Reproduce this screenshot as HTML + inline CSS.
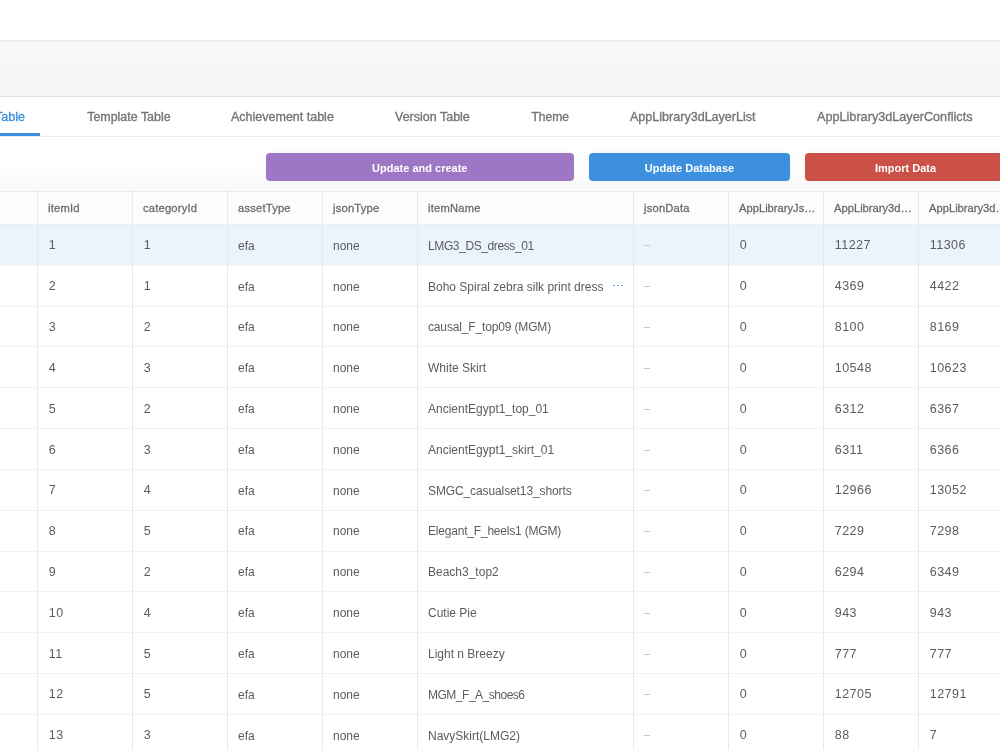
<!DOCTYPE html>
<html><head><meta charset="utf-8">
<style>
*{margin:0;padding:0;box-sizing:border-box}
html,body{width:1000px;height:750px;overflow:hidden;background:#fff;font-family:"Liberation Sans",sans-serif}
#root{position:absolute;left:0;top:0;width:1000px;height:750px;overflow:hidden;will-change:transform}
.abs{position:absolute}
#band{left:0;top:40px;width:1000px;height:57px;background:linear-gradient(#f8f8f8,#f4f4f4);border-top:2px solid #ebebeb;border-bottom:1px solid #dedede}
#tabs{left:0;top:97px;width:1000px;height:40px;background:#fff;border-bottom:1px solid #ececec}
.tab{position:absolute;top:108.8px;font-size:12.5px;line-height:16px;color:#757575;white-space:nowrap;-webkit-text-stroke:0.35px #757575}
.tab.active{color:#3d8fdd;-webkit-text-stroke:0.35px #3d8fdd}
#ink{left:0;top:133px;width:40px;height:3px;background:#3b8ee0}
#btnarea{left:0;top:137px;width:1000px;height:54px;background:linear-gradient(#fff 0%,#fefefe 60%,#f8f8f8 100%)}
.btn{position:absolute;top:153.2px;height:27.8px;border-radius:4px;box-shadow:0 0 10px rgba(0,0,0,0.035);color:#fff;font-weight:bold;font-size:11px;line-height:27.5px;padding-top:1.5px;text-align:center;white-space:nowrap}
.hrow{position:absolute;left:0;width:1000px;height:34px;background:#fcfcfc;border-top:1px solid #ececec;border-bottom:1px solid #ececec}
.row{position:absolute;left:0;width:1000px;height:40.82px;border-bottom:1px solid #f2f2f2;background:#fff}
.row.sel{background:#ebf4fd}
.vl{position:absolute;width:1px;height:560px;background:#e8e8e8}
.c{position:absolute;white-space:nowrap;font-size:12px;color:#5c5c5c;line-height:16px}
.c.n{letter-spacing:0.45px;font-size:12.5px;margin-left:0.8px;margin-top:-0.3px}
.h{position:absolute;white-space:nowrap;font-size:11.2px;color:#6a6a6a;line-height:14px;letter-spacing:0.2px;-webkit-text-stroke:0.28px #6a6a6a}
.more{position:absolute;left:613.2px;height:2px;width:10px}
.more i{position:absolute;top:0;width:1.7px;height:1.7px;border-radius:50%;background:#4a96e0}
.more i:nth-child(1){left:0}.more i:nth-child(2){left:4px}.more i:nth-child(3){left:8px}
.dash{position:absolute;width:6px;height:1px;background:#c8c8c8}
</style></head><body><div id="root">
<div class="abs" id="band"></div>
<div class="abs" id="tabs"></div>
<div class="tab active" style="left:-5px;font-size:12.5px">Table</div>
<div class="tab" style="left:87.2px;font-size:12.45px">Template Table</div>
<div class="tab" style="left:231px;font-size:12.5px">Achievement table</div>
<div class="tab" style="left:395px;font-size:12.5px">Version Table</div>
<div class="tab" style="left:531.5px;font-size:12.0px">Theme</div>
<div class="tab" style="left:630px;font-size:12.55px">AppLibrary3dLayerList</div>
<div class="tab" style="left:817px;font-size:12.66px">AppLibrary3dLayerConflicts</div>
<div class="abs" id="ink"></div>
<div class="abs" id="btnarea"></div>
<div class="btn" style="left:265.5px;width:308.5px;background:#9d76c4">Update and create</div>
<div class="btn" style="left:589px;width:201px;background:#3d90dd">Update Database</div>
<div class="btn" style="left:805px;width:201px;background:#cb5148">Import Data</div>
<div class="hrow" style="top:191px"></div>
<div class="h" style="left:48px;top:200.8px">itemId</div>
<div class="h" style="left:143px;top:200.8px">categoryId</div>
<div class="h" style="left:238px;top:200.8px">assetType</div>
<div class="h" style="left:333px;top:200.8px">jsonType</div>
<div class="h" style="left:428px;top:200.8px">itemName</div>
<div class="h" style="left:644px;top:200.8px">jsonData</div>
<div class="h" style="left:739px;top:200.8px;letter-spacing:0">AppLibraryJs…</div>
<div class="h" style="left:834px;top:200.8px;letter-spacing:0">AppLibrary3d…</div>
<div class="h" style="left:929px;top:200.8px;letter-spacing:0">AppLibrary3d…</div>
<div class="row sel" style="top:225.00px"></div>
<div class="row" style="top:265.82px"></div>
<div class="row" style="top:306.64px"></div>
<div class="row" style="top:347.46px"></div>
<div class="row" style="top:388.28px"></div>
<div class="row" style="top:429.10px"></div>
<div class="row" style="top:469.92px"></div>
<div class="row" style="top:510.74px"></div>
<div class="row" style="top:551.56px"></div>
<div class="row" style="top:592.38px"></div>
<div class="row" style="top:633.20px"></div>
<div class="row" style="top:674.02px"></div>
<div class="row" style="top:714.84px"></div>
<div class="c n" style="left:48px;top:237.70px">1</div>
<div class="c n" style="left:143px;top:237.70px">1</div>
<div class="c" style="left:238px;top:237.70px">efa</div>
<div class="c" style="left:333px;top:237.70px">none</div>
<div class="c" style="left:428px;top:237.70px;letter-spacing:-0.39px">LMG3_DS_dress_01</div>
<div class="dash" style="left:644px;top:245.40px"></div>
<div class="c n" style="left:739px;top:237.70px">0</div>
<div class="c n" style="left:834px;top:237.70px">11227</div>
<div class="c n" style="left:929px;top:237.70px">11306</div>
<div class="c n" style="left:48px;top:278.52px">2</div>
<div class="c n" style="left:143px;top:278.52px">1</div>
<div class="c" style="left:238px;top:278.52px">efa</div>
<div class="c" style="left:333px;top:278.52px">none</div>
<div class="c" style="left:428px;top:278.52px">Boho Spiral zebra silk print dress</div>
<div class="dash" style="left:644px;top:286.22px"></div>
<div class="c n" style="left:739px;top:278.52px">0</div>
<div class="c n" style="left:834px;top:278.52px">4369</div>
<div class="c n" style="left:929px;top:278.52px">4422</div>
<div class="more" style="top:284.72px"><i></i><i></i><i></i></div>
<div class="c n" style="left:48px;top:319.34px">3</div>
<div class="c n" style="left:143px;top:319.34px">2</div>
<div class="c" style="left:238px;top:319.34px">efa</div>
<div class="c" style="left:333px;top:319.34px">none</div>
<div class="c" style="left:428px;top:319.34px;letter-spacing:-0.15px">causal_F_top09 (MGM)</div>
<div class="dash" style="left:644px;top:327.04px"></div>
<div class="c n" style="left:739px;top:319.34px">0</div>
<div class="c n" style="left:834px;top:319.34px">8100</div>
<div class="c n" style="left:929px;top:319.34px">8169</div>
<div class="c n" style="left:48px;top:360.16px">4</div>
<div class="c n" style="left:143px;top:360.16px">3</div>
<div class="c" style="left:238px;top:360.16px">efa</div>
<div class="c" style="left:333px;top:360.16px">none</div>
<div class="c" style="left:428px;top:360.16px">White Skirt</div>
<div class="dash" style="left:644px;top:367.86px"></div>
<div class="c n" style="left:739px;top:360.16px">0</div>
<div class="c n" style="left:834px;top:360.16px">10548</div>
<div class="c n" style="left:929px;top:360.16px">10623</div>
<div class="c n" style="left:48px;top:400.98px">5</div>
<div class="c n" style="left:143px;top:400.98px">2</div>
<div class="c" style="left:238px;top:400.98px">efa</div>
<div class="c" style="left:333px;top:400.98px">none</div>
<div class="c" style="left:428px;top:400.98px">AncientEgypt1_top_01</div>
<div class="dash" style="left:644px;top:408.68px"></div>
<div class="c n" style="left:739px;top:400.98px">0</div>
<div class="c n" style="left:834px;top:400.98px">6312</div>
<div class="c n" style="left:929px;top:400.98px">6367</div>
<div class="c n" style="left:48px;top:441.80px">6</div>
<div class="c n" style="left:143px;top:441.80px">3</div>
<div class="c" style="left:238px;top:441.80px">efa</div>
<div class="c" style="left:333px;top:441.80px">none</div>
<div class="c" style="left:428px;top:441.80px">AncientEgypt1_skirt_01</div>
<div class="dash" style="left:644px;top:449.50px"></div>
<div class="c n" style="left:739px;top:441.80px">0</div>
<div class="c n" style="left:834px;top:441.80px">6311</div>
<div class="c n" style="left:929px;top:441.80px">6366</div>
<div class="c n" style="left:48px;top:482.62px">7</div>
<div class="c n" style="left:143px;top:482.62px">4</div>
<div class="c" style="left:238px;top:482.62px">efa</div>
<div class="c" style="left:333px;top:482.62px">none</div>
<div class="c" style="left:428px;top:482.62px;letter-spacing:-0.11px">SMGC_casualset13_shorts</div>
<div class="dash" style="left:644px;top:490.32px"></div>
<div class="c n" style="left:739px;top:482.62px">0</div>
<div class="c n" style="left:834px;top:482.62px">12966</div>
<div class="c n" style="left:929px;top:482.62px">13052</div>
<div class="c n" style="left:48px;top:523.44px">8</div>
<div class="c n" style="left:143px;top:523.44px">5</div>
<div class="c" style="left:238px;top:523.44px">efa</div>
<div class="c" style="left:333px;top:523.44px">none</div>
<div class="c" style="left:428px;top:523.44px;letter-spacing:-0.2px">Elegant_F_heels1 (MGM)</div>
<div class="dash" style="left:644px;top:531.14px"></div>
<div class="c n" style="left:739px;top:523.44px">0</div>
<div class="c n" style="left:834px;top:523.44px">7229</div>
<div class="c n" style="left:929px;top:523.44px">7298</div>
<div class="c n" style="left:48px;top:564.26px">9</div>
<div class="c n" style="left:143px;top:564.26px">2</div>
<div class="c" style="left:238px;top:564.26px">efa</div>
<div class="c" style="left:333px;top:564.26px">none</div>
<div class="c" style="left:428px;top:564.26px">Beach3_top2</div>
<div class="dash" style="left:644px;top:571.96px"></div>
<div class="c n" style="left:739px;top:564.26px">0</div>
<div class="c n" style="left:834px;top:564.26px">6294</div>
<div class="c n" style="left:929px;top:564.26px">6349</div>
<div class="c n" style="left:48px;top:605.08px">10</div>
<div class="c n" style="left:143px;top:605.08px">4</div>
<div class="c" style="left:238px;top:605.08px">efa</div>
<div class="c" style="left:333px;top:605.08px">none</div>
<div class="c" style="left:428px;top:605.08px">Cutie Pie</div>
<div class="dash" style="left:644px;top:612.78px"></div>
<div class="c n" style="left:739px;top:605.08px">0</div>
<div class="c n" style="left:834px;top:605.08px">943</div>
<div class="c n" style="left:929px;top:605.08px">943</div>
<div class="c n" style="left:48px;top:645.90px">11</div>
<div class="c n" style="left:143px;top:645.90px">5</div>
<div class="c" style="left:238px;top:645.90px">efa</div>
<div class="c" style="left:333px;top:645.90px">none</div>
<div class="c" style="left:428px;top:645.90px">Light n Breezy</div>
<div class="dash" style="left:644px;top:653.60px"></div>
<div class="c n" style="left:739px;top:645.90px">0</div>
<div class="c n" style="left:834px;top:645.90px">777</div>
<div class="c n" style="left:929px;top:645.90px">777</div>
<div class="c n" style="left:48px;top:686.72px">12</div>
<div class="c n" style="left:143px;top:686.72px">5</div>
<div class="c" style="left:238px;top:686.72px">efa</div>
<div class="c" style="left:333px;top:686.72px">none</div>
<div class="c" style="left:428px;top:686.72px;letter-spacing:-0.49px">MGM_F_A_shoes6</div>
<div class="dash" style="left:644px;top:694.42px"></div>
<div class="c n" style="left:739px;top:686.72px">0</div>
<div class="c n" style="left:834px;top:686.72px">12705</div>
<div class="c n" style="left:929px;top:686.72px">12791</div>
<div class="c n" style="left:48px;top:727.54px">13</div>
<div class="c n" style="left:143px;top:727.54px">3</div>
<div class="c" style="left:238px;top:727.54px">efa</div>
<div class="c" style="left:333px;top:727.54px">none</div>
<div class="c" style="left:428px;top:727.54px">NavySkirt(LMG2)</div>
<div class="dash" style="left:644px;top:735.24px"></div>
<div class="c n" style="left:739px;top:727.54px">0</div>
<div class="c n" style="left:834px;top:727.54px">88</div>
<div class="c n" style="left:929px;top:727.54px">7</div>
<div class="vl" style="left:37px;top:191px"></div>
<div class="vl" style="left:132px;top:191px"></div>
<div class="vl" style="left:227px;top:191px"></div>
<div class="vl" style="left:322px;top:191px"></div>
<div class="vl" style="left:417px;top:191px"></div>
<div class="vl" style="left:633px;top:191px"></div>
<div class="vl" style="left:728px;top:191px"></div>
<div class="vl" style="left:823px;top:191px"></div>
<div class="vl" style="left:918px;top:191px"></div>
</div></body></html>
